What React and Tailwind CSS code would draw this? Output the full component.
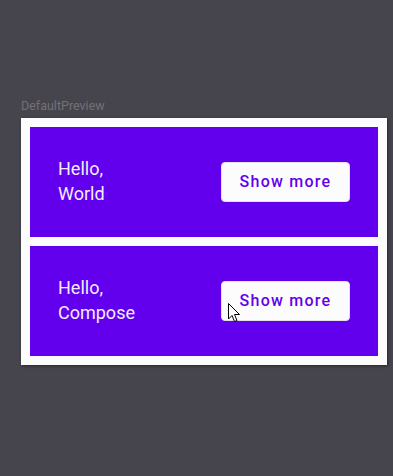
export default function App() {
  const greetings = ['World', 'Compose'];
  return (
    <div className="relative h-[476px] w-[393px] bg-[#46454d] font-['Roboto',sans-serif]">
      <div className="pl-[21px] pt-[98px]">
        <div className="h-[20px] text-[12.5px] leading-[16px] text-[#727176]">DefaultPreview</div>
        <div className="flex w-[366px] flex-col gap-[9px] bg-[#fcfcfc] p-[9px] shadow-[1px_1px_3px_rgba(0,0,0,0.45)]">
          {greetings.map((name) => (
            <div key={name} className="flex h-[110px] items-center justify-between bg-[#6200ee] px-[28px]">
              <div className="-mt-[2px] text-[18px] leading-[25px] text-[#f3ecfd]">
                <div>Hello,</div>
                <div>{name}</div>
              </div>
              <button
                type="button"
                className="h-[40px] w-[129px] rounded-[4px] border border-[#e4e0ea] bg-[#fcfcfc] text-[16px] font-medium tracking-[1.25px] text-[#6200ee]"
              >
                Show more
              </button>
            </div>
          ))}
        </div>
      </div>
      <svg className="absolute left-[228px] top-[303px]" width="13" height="20" viewBox="0 0 13 20">
        <path d="M0.5 0.5 L0.5 16 L4 12.5 L6.5 18.5 L9 17.5 L6.5 11.5 L11.5 11.5 Z" fill="#fff" stroke="#000" strokeWidth="1" strokeLinejoin="miter" />
      </svg>
    </div>
  );
}
